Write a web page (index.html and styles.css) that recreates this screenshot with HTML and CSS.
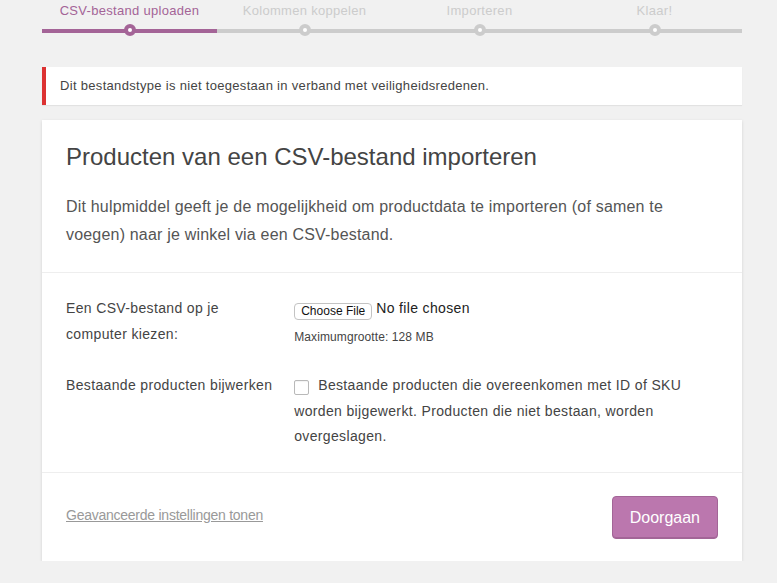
FILE: index.html
```html
<!DOCTYPE html>
<html lang="nl">
<head>
<meta charset="utf-8">
<title>Producten importeren</title>
<link rel="stylesheet" href="styles.css">
</head>
<body>
<div class="wrap">
  <ol class="steps">
    <li class="step done">CSV-bestand uploaden</li>
    <li class="step">Kolommen koppelen</li>
    <li class="step">Importeren</li>
    <li class="step">Klaar!</li>
  </ol>

  <div class="notice">Dit bestandstype is niet toegestaan in verband met veiligheidsredenen.</div>

  <section class="card">
    <header class="card-head">
      <h2>Producten van een CSV-bestand importeren</h2>
      <p>Dit hulpmiddel geeft je de mogelijkheid om productdata te importeren (of samen te voegen) naar je winkel via een CSV-bestand.</p>
    </header>

    <div class="card-body">
      <div class="row">
        <div class="label">Een CSV-bestand op je computer kiezen:</div>
        <div class="field">
          <div class="file"><span class="file-btn">Choose File</span><span class="file-name">No file chosen</span></div>
          <div class="hint">Maximumgrootte: 128 MB</div>
        </div>
      </div>
      <div class="row row-update">
        <div class="label">Bestaande producten bijwerken</div>
        <div class="field"><span class="checkbox"></span>Bestaande producten die overeenkomen met ID of SKU worden bijgewerkt. Producten die niet bestaan, worden overgeslagen.</div>
      </div>
    </div>

    <footer class="actions">
      <a class="advanced" href="#">Geavanceerde instellingen tonen</a>
      <span class="btn">Doorgaan</span>
    </footer>
  </section>
</div>
</body>
</html>
```

FILE: styles.css
```css
*, *::before, *::after { box-sizing: border-box; }

body {
  margin: 0;
  background: #f1f1f1;
  font-family: "Liberation Sans", Arial, sans-serif;
  color: #444;
}

.wrap {
  width: 700px;
  margin-left: 42px;
}

/* progress steps */
.steps {
  list-style: none;
  margin: 0;
  padding: 0;
  display: flex;
}

.step {
  flex: 1;
  position: relative;
  text-align: center;
  font-size: 13px;
  letter-spacing: 0.3px;
  line-height: 21px;
  color: #ccc;
  padding-bottom: 8px;
  border-bottom: 4px solid #ccc;
}

.step.done {
  color: #a46497;
  border-color: #a46497;
}

.step::after {
  content: "";
  position: absolute;
  left: 50%;
  bottom: -7px;
  width: 12px;
  height: 12px;
  margin-left: -6px;
  border-radius: 50%;
  background: #fff;
  border: 4px solid #ccc;
}

.step.done::after {
  border-color: #a46497;
}

/* notice */
.notice {
  margin-top: 34px;
  background: #fff;
  border-left: 4px solid #dc3232;
  box-shadow: 0 1px 1px rgba(0, 0, 0, 0.06);
  padding: 0 14px;
  font-size: 13px;
  letter-spacing: 0.31px;
  line-height: 38px;
  color: #444;
}

/* card */
.card {
  margin-top: 15px;
  background: #fff;
  box-shadow: 0 1px 3px rgba(0, 0, 0, 0.13);
}

.card-head {
  padding: 22px 24px 23px;
  border-bottom: 1px solid #eee;
}

.card-head h2 {
  margin: 0;
  font-size: 24px;
  line-height: 30px;
  font-weight: normal;
  color: #444;
}

.card-head p {
  margin: 21px 0 0;
  font-size: 16px;
  letter-spacing: 0.19px;
  line-height: 28px;
  color: #555;
}

.card-body {
  padding: 23px 24px 22px;
  border-bottom: 1px solid #eee;
}

.row {
  display: flex;
  font-size: 14px;
  letter-spacing: 0.35px;
  line-height: 25.5px;
  color: #444;
}

.row-update {
  margin-top: 23px;
}

.label {
  width: 35%;
  flex: none;
  padding-right: 16px;
}

.field {
  flex: 1;
  min-width: 0;
}

.file {
  display: flex;
  align-items: flex-start;
  height: 25.5px;
}

.file-btn {
  margin-top: 7px;
  height: 17px;
  padding: 0 6px;
  border: 1px solid #c3c3c3;
  border-radius: 4px;
  background: #fff;
  font-size: 12px;
  letter-spacing: 0;
  line-height: 15px;
  color: #111;
}

.file-name {
  margin-left: 4px;
  color: #222;
}

.hint {
  padding-top: 3px;
  font-size: 12px;
  letter-spacing: 0.1px;
  color: #444;
}

.checkbox {
  display: inline-block;
  width: 15px;
  height: 15px;
  margin-right: 9px;
  vertical-align: -5px;
  border: 1px solid #b9b9b9;
  border-radius: 2px;
  background: #fff;
  box-shadow: inset 0 1px 1px rgba(0, 0, 0, 0.05);
}

/* footer actions */
.actions {
  padding: 23px 24px 22px;
  display: flex;
  justify-content: space-between;
  align-items: center;
}

.advanced {
  margin-bottom: 5px;
  font-size: 14px;
  letter-spacing: -0.25px;
  color: #999;
  text-decoration: underline;
}

.btn {
  height: 43px;
  padding: 0 17px;
  border: 1px solid #a36597;
  border-radius: 4px;
  background: #bb77ae;
  box-shadow: inset 0 -1px 0 #a36597;
  color: #fff;
  font-size: 16px;
  line-height: 41px;
}
```
